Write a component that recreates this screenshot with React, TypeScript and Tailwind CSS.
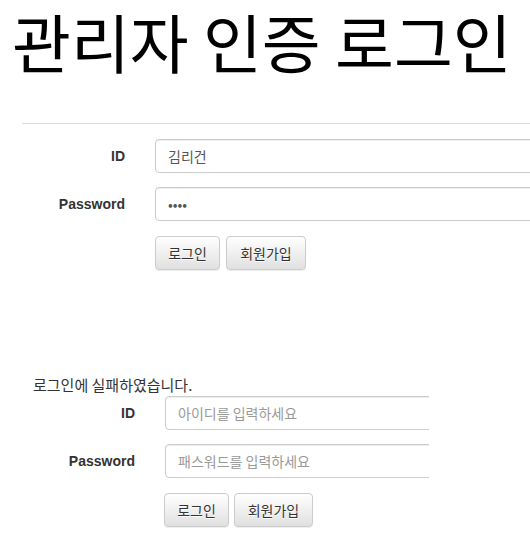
import React from "react";

function Btn({ children, w }: { children: React.ReactNode; w: string }) {
  return (
    <button
      type="button"
      className={`${w} h-[34px] rounded-[4px] border border-[#ccc] bg-[linear-gradient(to_bottom,#ffffff_0%,#e0e0e0_100%)] text-[14px] text-[#333] shadow-[inset_0_1px_0_rgba(255,255,255,0.15),0_1px_1px_rgba(0,0,0,0.075)] [text-shadow:0_1px_0_#fff] font-['Noto_Sans_CJK_KR',sans-serif] flex items-center justify-center`}
    >
      {children}
    </button>
  );
}

function Row({
  label,
  labelW,
  value,
  placeholder,
  password,
  clipW,
}: {
  label: string;
  labelW: string;
  value?: string;
  placeholder?: string;
  password?: boolean;
  clipW: string;
}) {
  return (
    <div className="flex items-center h-[34px]">
      <div className={`${labelW} shrink-0 text-right font-bold text-[14px] text-[#333] font-['Liberation_Sans',sans-serif]`}>
        {label}
      </div>
      <div className={`ml-[30px] ${clipW} shrink-0 overflow-hidden h-[34px]`}>
        <input
          readOnly
          type={password ? "password" : "text"}
          defaultValue={value}
          placeholder={placeholder}
          className="w-[600px] h-[34px] rounded-[4px] border border-[#ccc] px-[12px] text-[14px] text-[#555] placeholder:text-[#999] shadow-[inset_0_1px_1px_rgba(0,0,0,0.075)] font-['Noto_Sans_CJK_KR',sans-serif] outline-none"
        />
      </div>
    </div>
  );
}

export default function App() {
  return (
    <div className="w-[530px] h-[541px] overflow-hidden bg-white text-[#333] font-['Liberation_Sans','Noto_Sans_CJK_KR',sans-serif]">
      <h1 className="pl-[12px] text-[64px] leading-[80px] font-normal text-black font-['Noto_Sans_CJK_KR',sans-serif] whitespace-nowrap">
        관리자 인증 로그인
      </h1>
      <div className="ml-[22px] mt-[43px] border-t border-[#dcdcdc]" />

      <div className="mt-[15px] flex flex-col gap-[14px]">
        <Row label="ID" labelW="w-[125px]" value="김리건" clipW="w-[600px]" />
        <Row label="Password" labelW="w-[125px]" value="1234" password clipW="w-[600px]" />
        <div className="flex gap-[6px] ml-[155px] mt-[1px]">
          <Btn w="w-[65px]">로그인</Btn>
          <Btn w="w-[80px]">회원가입</Btn>
        </div>
      </div>

      <div className="mt-[106px] ml-[33px] text-[15px] leading-[18px] text-[#333] font-['Noto_Sans_CJK_KR',sans-serif]">
        로그인에 실패하였습니다.
      </div>
      <div className="mt-[2px] flex flex-col gap-[14px]">
        <Row label="ID" labelW="w-[135px]" placeholder="아이디를 입력하세요" clipW="w-[264px]" />
        <Row label="Password" labelW="w-[135px]" placeholder="패스워드를 입력하세요" password clipW="w-[264px]" />
        <div className="flex gap-[5px] ml-[164px] mt-[1px]">
          <Btn w="w-[65px]">로그인</Btn>
          <Btn w="w-[79px]">회원가입</Btn>
        </div>
      </div>
    </div>
  );
}
